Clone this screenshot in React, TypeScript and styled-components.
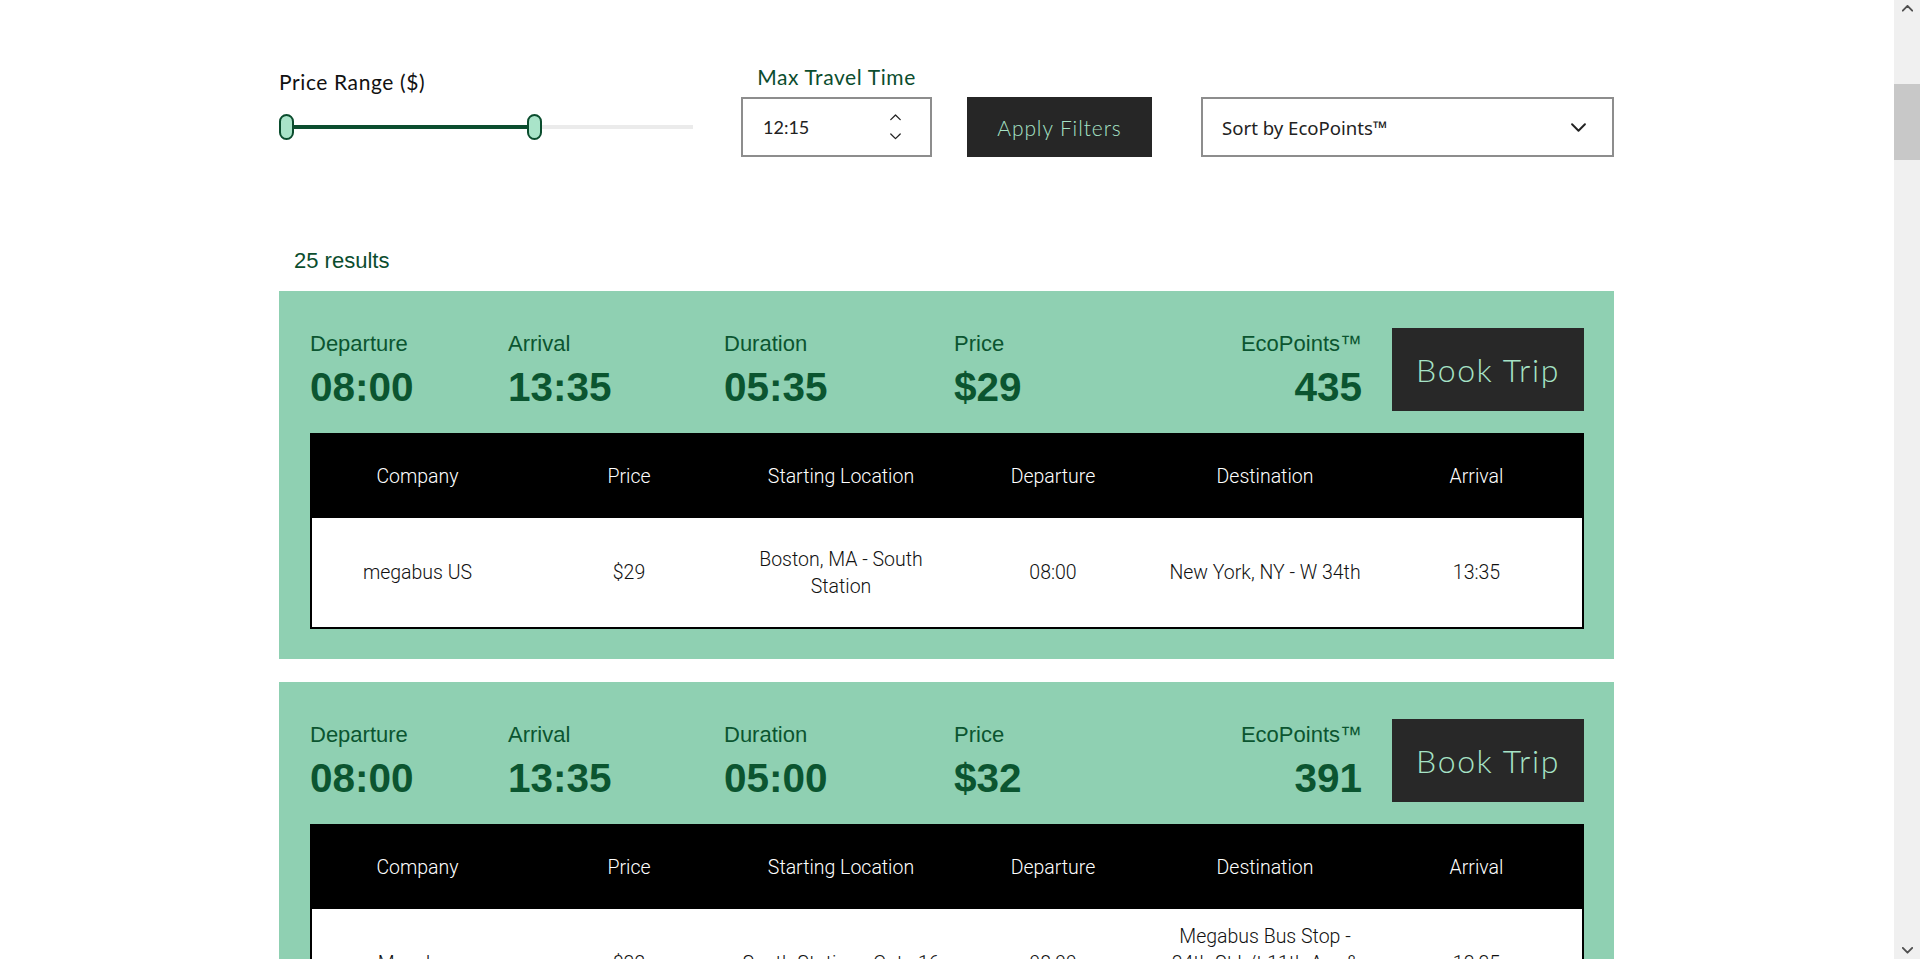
import * as React from "react"
import styled, {createGlobalStyle} from "styled-components"

interface Leg {
  company: string
  price: string
  from: string
  departure: string
  to: string
  arrival: string
}
interface Trip {
  departure: string
  arrival: string
  duration: string
  price: string
  eco: number
  legs: Leg[]
}

const trips: Trip[] = [
  {
    departure: "08:00", arrival: "13:35", duration: "05:35", price: "$29", eco: 435,
    legs: [{company: "megabus US", price: "$29", from: "Boston, MA - South Station", departure: "08:00", to: "New York, NY - W 34th", arrival: "13:35"}]
  },
  {
    departure: "08:00", arrival: "13:35", duration: "05:00", price: "$32", eco: 391,
    legs: [{company: "Megabus", price: "$32", from: "South Station - Gate 16", departure: "08:00", to: "Megabus Bus Stop - 34th St b/t 11th Ave & 12th Ave", arrival: "13:35"}]
  },
  {
    departure: "09:00", arrival: "13:30", duration: "04:30", price: "$35", eco: 380,
    legs: [{company: "Peter Pan", price: "$35", from: "Boston, MA - South Station", departure: "09:00", to: "New York, NY - Port Authority", arrival: "13:30"}]
  }
]

const columns = ["Company", "Price", "Starting Location", "Departure", "Destination", "Arrival"]

const GlobalStyle = createGlobalStyle`
  html, body {
    margin: 0;
    padding: 0;
    overflow: hidden;
    background: #ffffff;
  }
  * { box-sizing: border-box; }
`

const Frame = styled.div`
  display: flex;
  height: 100vh;
  width: 100vw;
`
const Main = styled.main`
  flex: 1;
  overflow: hidden;
  padding-right: 1px;
`
const Content = styled.div`
  width: 1335px;
  margin: 0 auto;
  padding-top: 65px;
`

const ScrollTrack = styled.div`
  width: 26px;
  flex-shrink: 0;
  background: #f0f0f0;
  display: flex;
  flex-direction: column;
  align-items: center;
  justify-content: space-between;
`
const ScrollArrow = styled.div`
  height: 17px;
  display: flex;
  align-items: center;
  justify-content: center;
`
const ScrollThumb = styled.div`
  width: 100%;
  height: 76px;
  background: #c8c8c8;
`
const ScrollBody = styled.div`
  flex: 1;
  width: 100%;
  padding-top: 67px;
`

const FilterRow = styled.div`
  display: flex;
  align-items: flex-end;
`
const FilterBlock = styled.div<{ $ml?: number }>`
  display: flex;
  flex-direction: column;
  margin-left: ${p => p.$ml || 0}px;
`
const FilterLabel = styled.label<{ $green?: boolean, $center?: boolean }>`
  font-family: Lato, "Open Sans", sans-serif;
  font-size: 21px;
  line-height: 24px;
  letter-spacing: 0.6px;
  color: ${p => p.$green ? "#0b4d2e" : "#111111"};
  text-align: ${p => p.$center ? "center" : "left"};
  white-space: nowrap;
`
const SliderWrap = styled.div`
  position: relative;
  width: 414px;
  height: 30px;
  margin-top: 18px;
  margin-bottom: 15px;
`
const SliderRail = styled.div`
  position: absolute;
  left: 7px;
  right: 0;
  top: 13px;
  height: 4px;
  background: #ebebeb;
`
const SliderFill = styled.div`
  position: absolute;
  top: 13px;
  height: 4px;
  background: #0b4d2e;
`
const SliderThumb = styled.div`
  position: absolute;
  top: 2px;
  width: 15px;
  height: 26px;
  margin-left: -7px;
  border-radius: 8px;
  border: 2px solid #0b4d2e;
  background: #a9e4c9;
`

const TimeBox = styled.div`
  width: 191px;
  height: 60px;
  margin-top: 8px;
  border: 2px solid #8d8d8d;
  display: flex;
  align-items: center;
  justify-content: space-between;
  padding: 0 29px 0 20px;
  font-family: Lato, "Open Sans", sans-serif;
  font-size: 18px;
  color: #222;
`
const Spinner = styled.div`
  display: flex;
  flex-direction: column;
  gap: 12px;
`

const ApplyButton = styled.button`
  margin-left: 35px;
  width: 185px;
  height: 60px;
  border: none;
  background: #262626;
  color: #a6e3c6;
  font-family: Lato, "Open Sans", sans-serif;
  font-weight: 300;
  font-size: 21px;
  letter-spacing: 0.9px;
  cursor: pointer;
`
const SortSelect = styled.div`
  margin-left: 49px;
  width: 413px;
  height: 60px;
  border: 2px solid #8d8d8d;
  display: flex;
  align-items: center;
  justify-content: space-between;
  padding: 0 26px 0 19px;
  font-family: "Noto Sans", sans-serif;
  font-size: 18.6px;
  color: #222;
`

const ResultCount = styled.div`
  margin-top: 91px;
  padding-left: 15px;
  font-family: "Liberation Sans", Arial, sans-serif;
  font-size: 22px;
  line-height: 26px;
  color: #0b4d2e;
`

const CardList = styled.div`
  display: flex;
  flex-direction: column;
  gap: 23px;
  margin-top: 17px;
`
const Card = styled.section`
  background: #8fd0b2;
  padding: 37px 30px 30px 31px;
`
const Summary = styled.div`
  display: flex;
  align-items: center;
`
const Stats = styled.div`
  flex: 1;
  display: grid;
  grid-template-columns: 198px 216px 230px 1fr auto;
`
const Stat = styled.div<{ $right?: boolean }>`
  display: flex;
  flex-direction: column;
  gap: 8px;
  text-align: ${p => p.$right ? "right" : "left"};
  color: #0b5530;
  font-family: "Liberation Sans", Arial, sans-serif;
`
const StatLabel = styled.span`
  font-size: 22px;
  line-height: 26px;
`
const StatValue = styled.span`
  font-size: 40.5px;
  line-height: 44px;
  font-weight: 700;
`
const BookButton = styled.button`
  margin-left: 30px;
  width: 192px;
  height: 83px;
  border: none;
  background: #282828;
  color: #a6e3c6;
  font-family: Lato, "Open Sans", sans-serif;
  font-weight: 300;
  font-size: 32px;
  letter-spacing: 1.6px;
  cursor: pointer;
`

const Table = styled.table`
  width: 100%;
  margin-top: 22px;
  border-collapse: collapse;
  table-layout: fixed;
  background: #ffffff;
  border: 2px solid #000000;
  font-family: Roboto, "Liberation Sans", sans-serif;
  font-weight: 300;
  font-size: 19.5px;
`
const HeadCell = styled.th`
  background: #000000;
  color: #ffffff;
  font-weight: 300;
  height: 84px;
  padding: 0 6px;
  text-align: center;
`
const Cell = styled.td`
  color: #111111;
  height: 110px;
  padding: 12px 6px;
  line-height: 27px;
  text-align: center;
  vertical-align: middle;
`

const Chevron = ({dir, size = 14, color = "#222", stroke = 1.8}: { dir: "up" | "down", size?: number, color?: string, stroke?: number }) => (
  <svg width={size} height={size * 0.6} viewBox="0 0 14 8" fill="none">
    <path d={dir === "up" ? "M1 7 L7 1 L13 7" : "M1 1 L7 7 L13 1"} stroke={color} strokeWidth={stroke} strokeLinecap="round" strokeLinejoin="round"/>
  </svg>
)

const PriceSlider = ({low, high}: { low: number, high: number }) => {
  const pos = (v: number) => `calc(7px + (100% - 14px) * ${v / 100})`
  return (
    <SliderWrap>
      <SliderRail/>
      <SliderFill style={{left: pos(low), width: `calc((100% - 14px) * ${(high - low) / 100})`}}/>
      <SliderThumb style={{left: pos(low)}}/>
      <SliderThumb style={{left: pos(high)}}/>
    </SliderWrap>
  )
}

const TripCard = ({trip}: { trip: Trip }) => (
  <Card>
    <Summary>
      <Stats>
        <Stat><StatLabel>Departure</StatLabel><StatValue>{trip.departure}</StatValue></Stat>
        <Stat><StatLabel>Arrival</StatLabel><StatValue>{trip.arrival}</StatValue></Stat>
        <Stat><StatLabel>Duration</StatLabel><StatValue>{trip.duration}</StatValue></Stat>
        <Stat><StatLabel>Price</StatLabel><StatValue>{trip.price}</StatValue></Stat>
        <Stat $right><StatLabel>EcoPoints™</StatLabel><StatValue>{trip.eco}</StatValue></Stat>
      </Stats>
      <BookButton>Book Trip</BookButton>
    </Summary>
    <Table>
      <thead>
        <tr>{columns.map(c => <HeadCell key={c}>{c}</HeadCell>)}</tr>
      </thead>
      <tbody>
        {trip.legs.map((leg, i) => (
          <tr key={i}>
            <Cell>{leg.company}</Cell>
            <Cell>{leg.price}</Cell>
            <Cell>{leg.from}</Cell>
            <Cell>{leg.departure}</Cell>
            <Cell>{leg.to}</Cell>
            <Cell>{leg.arrival}</Cell>
          </tr>
        ))}
      </tbody>
    </Table>
  </Card>
)

const App = () => {
  return (
    <Frame>
      <GlobalStyle/>
      <Main>
        <Content>
          <FilterRow>
            <FilterBlock>
              <FilterLabel>Price Range ($)</FilterLabel>
              <PriceSlider low={0} high={62}/>
            </FilterBlock>
            <FilterBlock $ml={48}>
              <FilterLabel $green $center>Max Travel Time</FilterLabel>
              <TimeBox>
                <span>12:15</span>
                <Spinner>
                  <Chevron dir="up" size={11} stroke={1.6}/>
                  <Chevron dir="down" size={11} stroke={1.6}/>
                </Spinner>
              </TimeBox>
            </FilterBlock>
            <ApplyButton>Apply Filters</ApplyButton>
            <SortSelect>
              <span>Sort by EcoPoints™</span>
              <Chevron dir="down" size={15}/>
            </SortSelect>
          </FilterRow>
          <ResultCount>25 results</ResultCount>
          <CardList>
            {trips.map((trip, i) => <TripCard key={i} trip={trip}/>)}
          </CardList>
        </Content>
      </Main>
      <ScrollTrack>
        <ScrollArrow><Chevron dir="up" size={11} color="#505050" stroke={2.4}/></ScrollArrow>
        <ScrollBody><ScrollThumb/></ScrollBody>
        <ScrollArrow><Chevron dir="down" size={11} color="#505050" stroke={2.4}/></ScrollArrow>
      </ScrollTrack>
    </Frame>
  )
}

export default App
